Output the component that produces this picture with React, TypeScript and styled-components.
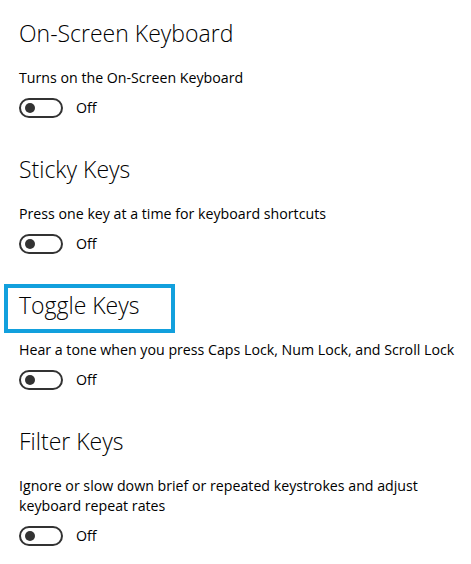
import styled, { createGlobalStyle } from "styled-components";

const GlobalStyle = createGlobalStyle`
  html, body {
    margin: 0;
    padding: 0;
    background: #ffffff;
  }
  body {
    font-family: "Open Sans", "Noto Sans", "Liberation Sans", sans-serif;
    color: #000000;
  }
`;

const Page = styled.div`
  display: flex;
  flex-direction: column;
  gap: 36px;
  padding: 18px 0 0 19px;
  width: 471px;
  height: 564px;
  box-sizing: border-box;
  overflow: hidden;
`;

const Section = styled.section`
  display: flex;
  flex-direction: column;
`;

const Heading = styled.h2<{ $highlight?: boolean }>`
  position: relative;
  margin: 0 0 20px 0;
  font-size: 23px;
  font-weight: 300;
  line-height: 30px;

  &::before {
    content: "";
    display: ${(p) => (p.$highlight ? "block" : "none")};
    position: absolute;
    left: -15px;
    top: -6px;
    width: 171px;
    height: 49px;
    box-sizing: border-box;
    border: 4px solid #12a0dd;
  }
`;

const Description = styled.p`
  margin: 0 0 10px 0;
  font-size: 14.2px;
  line-height: 20px;
  max-width: 445px;
`;

const ToggleRow = styled.div`
  display: flex;
  align-items: center;
  gap: 13px;
  height: 20px;
`;

const Track = styled.div`
  display: flex;
  align-items: center;
  width: 44px;
  height: 20px;
  box-sizing: border-box;
  border: 2px solid #333333;
  border-radius: 10px;
  padding-left: 4px;
`;

const Knob = styled.span`
  width: 10px;
  height: 10px;
  border-radius: 50%;
  background: #333333;
`;

const State = styled.span`
  font-size: 14.2px;
  line-height: 20px;
`;

const settings = [
  { title: "On-Screen Keyboard", text: "Turns on the On-Screen Keyboard" },
  { title: "Sticky Keys", text: "Press one key at a time for keyboard shortcuts" },
  {
    title: "Toggle Keys",
    text: "Hear a tone when you press Caps Lock, Num Lock, and Scroll Lock",
    highlight: true,
  },
  {
    title: "Filter Keys",
    text: "Ignore or slow down brief or repeated keystrokes and adjust keyboard repeat rates",
  },
];

export default function App() {
  return (
    <>
      <GlobalStyle />
      <Page>
        {settings.map((s) => (
          <Section key={s.title}>
            <Heading $highlight={s.highlight}>{s.title}</Heading>
            <Description>{s.text}</Description>
            <ToggleRow>
              <Track>
                <Knob />
              </Track>
              <State>Off</State>
            </ToggleRow>
          </Section>
        ))}
      </Page>
    </>
  );
}
